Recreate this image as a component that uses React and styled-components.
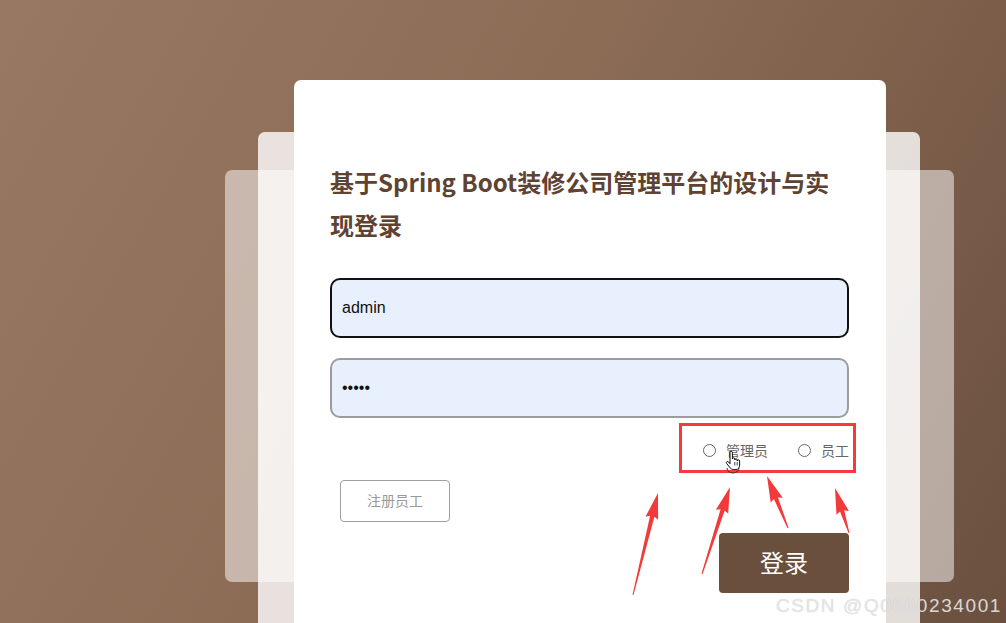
import React from 'react';
import styled, { createGlobalStyle } from 'styled-components';

const GlobalStyle = createGlobalStyle`
    html, body {
        margin: 0;
        padding: 0;
        overflow: hidden;
    }
    * {
        box-sizing: border-box;
    }
`

const Page = styled.div`
    position: relative;
    width: 1006px;
    height: 623px;
    overflow: hidden;
    padding: 80px 0 0 294px;
    background: linear-gradient(120deg, #987862 0%, #8c6c55 45%, #6b503f 100%);
    font-family: "Noto Sans CJK SC", "Noto Sans", sans-serif;
`

const Stage = styled.div`
    position: relative;
    width: 592px;
`

const Layer = styled.div`
    position: absolute;
    left: ${({left}) => left}px;
    top: ${({top}) => top}px;
    width: ${({w}) => w}px;
    height: ${({h}) => h}px;
    border-radius: 7px;
    background: rgba(255, 255, 255, ${({alpha}) => alpha});
`

const Card = styled.div`
    position: relative;
    z-index: 1;
    min-height: 570px;
    padding: 80px 37px 0 36px;
    background: #fff;
    border-radius: 7px 7px 0 0;
`

const Title = styled.h1`
    margin: 0;
    font-size: 24px;
    line-height: 43px;
    font-weight: 700;
    color: #5e4333;
`

const Field = styled.input`
    display: block;
    width: 100%;
    height: 60px;
    margin-top: ${({gap}) => gap}px;
    padding: 0 10px;
    border: 2px solid ${({focused}) => focused ? '#111' : '#9c9c9c'};
    border-radius: 10px;
    background: #e8f0fe;
    font-family: "Liberation Sans", Arial, sans-serif;
    font-size: 16px;
    color: #111;
    outline: none;
`

const RoleRow = styled.div`
    display: flex;
    justify-content: flex-end;
    margin-top: 22px;
`

const RoleGroup = styled.div`
    position: relative;
    display: flex;
    align-items: center;
    gap: 30px;
    height: 20px;

    &::after {
        content: "";
        position: absolute;
        top: -17px;
        bottom: -13px;
        left: -24px;
        right: -7px;
        border: 3px solid #f43a3a;
    }
`

const RoleOption = styled.label`
    display: flex;
    align-items: center;
    gap: 10px;
    font-size: 14px;
    color: #666;
`

const RadioDot = styled.input`
    appearance: none;
    width: 13px;
    height: 13px;
    margin: 0;
    border: 1px solid #666;
    border-radius: 50%;
    background: #fff;
`

const ActionRow = styled.div`
    display: flex;
    justify-content: space-between;
    align-items: flex-start;
    margin-top: 20px;
`

const RegisterButton = styled.button`
    width: 110px;
    height: 42px;
    margin-left: 10px;
    padding: 0 0 2px;
    border: 1px solid #a0a0a0;
    border-radius: 4px;
    background: #fff;
    color: #999;
    font-family: inherit;
    font-size: 14px;
`

const LoginButton = styled.button`
    width: 130px;
    height: 60px;
    margin-top: 53px;
    padding: 0 0 3px;
    border: none;
    border-radius: 4px;
    background: #6a4f3d;
    color: #fff;
    font-family: inherit;
    font-size: 24px;
`

const Overlay = styled.svg`
    position: absolute;
    left: 0;
    top: 0;
    z-index: 5;
    pointer-events: none;
`

const Watermark = styled.div`
    position: absolute;
    right: 4px;
    bottom: 6px;
    z-index: 6;
    font-family: "Liberation Sans", Arial, sans-serif;
    font-size: 19px;
    letter-spacing: 1.6px;
    color: rgba(230, 230, 230, 0.88);
    text-shadow: 0 0 1px rgba(140, 140, 140, 0.35);
`

const arrows = [
    [633, 595, 658, 493],
    [702, 574, 730, 487],
    [788, 528, 767, 476],
    [849, 533, 835, 488],
]

function arrowPoints([x1, y1, x2, y2]) {
    const dx = x2 - x1
    const dy = y2 - y1
    const len = Math.hypot(dx, dy)
    const ux = dx / len
    const uy = dy / len
    const nx = -uy
    const ny = ux
    const headLen = 24
    const bx = x2 - ux * headLen
    const by = y2 - uy * headLen
    const p = (x, y) => `${x.toFixed(1)},${y.toFixed(1)}`
    return [
        p(x1 + nx * 0.5, y1 + ny * 0.5),
        p(bx + nx * 2.2, by + ny * 2.2),
        p(bx + nx * 6.5 - ux * 2, by + ny * 6.5 - uy * 2),
        p(x2, y2),
        p(bx - nx * 6.5 - ux * 2, by - ny * 6.5 - uy * 2),
        p(bx - nx * 2.2, by - ny * 2.2),
        p(x1 - nx * 0.5, y1 - ny * 0.5),
    ].join(' ')
}

const Annotations = () => (
    <Overlay width="1006" height="623" viewBox="0 0 1006 623">
        {arrows.map((a, i) => (
            <polygon key={i} points={arrowPoints(a)} fill="#f23a3a" />
        ))}
        <path d="M727 468 a6 5 0 0 0 12 0" fill="none" stroke="#333" strokeWidth="1" />
        <g transform="translate(725 451)">
            <path
                d="M5 1.5 a1.2 1.2 0 0 1 2.4 0 V8 a1.2 1.2 0 0 1 2.4 0 V9 a1.2 1.2 0 0 1 2.4 0 V10 a1.2 1.2 0 0 1 2.4 0 V14 c0 2.8 -1.4 4.5 -3.8 4.5 H8.5 c-2 0 -3 -1 -4 -2.5 L1.6 12.4 a1.2 1.2 0 0 1 2 -1.4 L5 12.8 Z"
                fill="#fff"
                stroke="#111"
                strokeWidth="1"
                strokeLinejoin="round"
            />
            <path d="M9.8 11 V14.5 M12.2 11 V14.5" stroke="#111" strokeWidth="0.8" />
        </g>
    </Overlay>
)

export default function App() {
    return (
        <Page>
            <GlobalStyle />
            <Stage>
                <Layer left={-69} top={90} w={729} h={412} alpha={0.5} />
                <Layer left={-36} top={52} w={662} h={500} alpha={0.8} />
                <Card>
                    <Title>基于Spring Boot装修公司管理平台的设计与实现登录</Title>
                    <Field gap={32} focused type="text" defaultValue="admin" />
                    <Field gap={20} type="password" defaultValue="12345" />
                    <RoleRow>
                        <RoleGroup>
                            <RoleOption>
                                <RadioDot type="radio" name="role" />
                                管理员
                            </RoleOption>
                            <RoleOption>
                                <RadioDot type="radio" name="role" />
                                员工
                            </RoleOption>
                        </RoleGroup>
                    </RoleRow>
                    <ActionRow>
                        <RegisterButton>注册员工</RegisterButton>
                        <LoginButton>登录</LoginButton>
                    </ActionRow>
                </Card>
            </Stage>
            <Annotations />
            <Watermark>CSDN @Q0860234001</Watermark>
        </Page>
    )
}
